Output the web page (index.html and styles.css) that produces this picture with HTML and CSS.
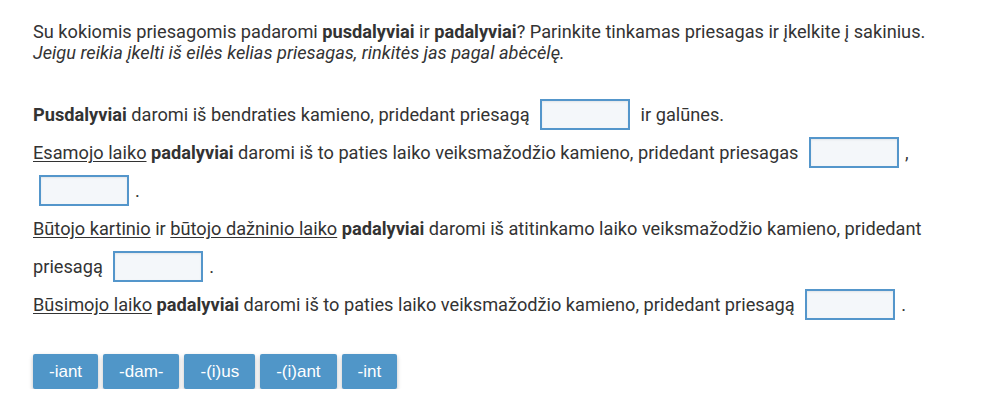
FILE: index.html
```html
<!DOCTYPE html>
<html>
<head>
    <title>Pusdalyviai ir padalyviai</title>
    <link rel="stylesheet" href="styles.css">
</head>
<body>
    <div class="task">
        <div class="question">
            Su kokiomis priesagomis padaromi <b>pusdalyviai</b> ir <b>padalyviai</b>? Parinkite tinkamas priesagas ir įkelkite į sakinius.<br>
            <i>Jeigu reikia įkelti iš eilės kelias priesagas, rinkitės jas pagal abėcėlę.</i>
        </div>

        <div class="sentences">
            <p><b>Pusdalyviai</b> daromi iš bendraties kamieno, pridedant priesagą <span class="drop"></span> ir galūnes.</p>
            <p><u>Esamojo laiko</u> <b>padalyviai</b> daromi iš to paties laiko veiksmažodžio kamieno, pridedant priesagas <span class="drop"></span>, <span class="drop"></span>.</p>
            <p><u>Būtojo kartinio</u> ir <u>būtojo dažninio laiko</u> <b>padalyviai</b> daromi iš atitinkamo laiko veiksmažodžio kamieno, pridedant priesagą <span class="drop"></span>.</p>
            <p><u>Būsimojo laiko</u> <b>padalyviai</b> daromi iš to paties laiko veiksmažodžio kamieno, pridedant priesagą <span class="drop"></span>.</p>
        </div>

        <div class="answers">
            <button type="button" class="answer">-iant</button>
            <button type="button" class="answer">-dam-</button>
            <button type="button" class="answer">-(i)us</button>
            <button type="button" class="answer">-(i)ant</button>
            <button type="button" class="answer">-int</button>
        </div>
    </div>
</body>
</html>
```

FILE: styles.css
```css
body {
    margin: 0;
    background: #fff;
    font-family: Roboto, "Noto Sans", sans-serif;
    font-size: 18.2px;
    color: #333;
}

.task {padding: 21px 33px 0 33px;}
.question {line-height: 21px;}
.question i {font-style: italic;}

.sentences {margin-top: 33px;line-height: 38px;}
.sentences p {margin: 0;}
.sentences b {font-weight: 700;}
.sentences u {text-decoration: underline;text-underline-offset: 2px;}

.drop {
    display: inline-block;
    box-sizing: border-box;
    width: 90px;
    height: 31px;
    margin: 0 6px;
    border: 2px solid #5496cb;
    background: #f4f7fa;
    box-shadow: inset 0 1px 2px rgba(0,0,0,0.08);
    vertical-align: -9px;
}

.answers {display: flex;gap: 5px;margin-top: 30px;}
.answer {
    height: 35px;
    padding: 0 16px;
    border: none;
    border-radius: 2px;
    background: #5096c8;
    color: #fff;
    font-family: "Liberation Sans", Arial, sans-serif;
    font-size: 17px;
    box-shadow: 0 2px 4px rgba(0,0,0,0.25);
    cursor: pointer;
}
```
